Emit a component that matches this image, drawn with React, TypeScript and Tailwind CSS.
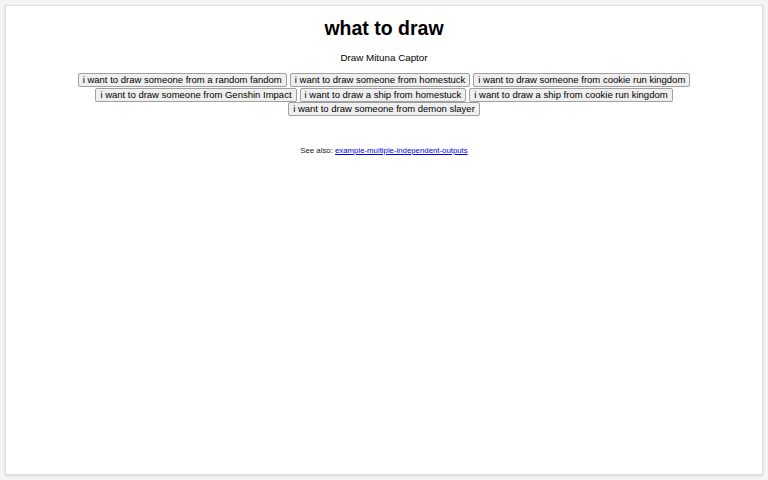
const options = [
  "i want to draw someone from a random fandom",
  "i want to draw someone from homestuck",
  "i want to draw someone from cookie run kingdom",
  "i want to draw someone from Genshin Impact",
  "i want to draw a ship from homestuck",
  "i want to draw a ship from cookie run kingdom",
  "i want to draw someone from demon slayer",
];

export default function App() {
  return (
    <div className="h-[480px] w-[768px] bg-[#f4f4f4] p-[5px] font-['Liberation_Sans',Arial,sans-serif] text-black">
      <div className="flex h-full flex-col items-center border border-[#dedede] bg-white shadow-[0_1px_2px_rgba(0,0,0,0.12)]">
        <h1 className="mt-[11px] text-[19.5px] font-bold leading-[23px]">what to draw</h1>
        <p className="mt-[12px] text-[9.8px] leading-[12px]">Draw Mituna Captor</p>

        {/* option buttons */}
        <div className="mt-[9px] flex w-[640px] flex-wrap justify-center gap-x-[3px] gap-y-[0.5px]">
          {options.map((label) => (
            <button
              key={label}
              className="h-[14px] rounded-[2px] border border-[#a0a0a0] bg-[#efefef] px-[4px] text-[9.5px] leading-[12px] text-black"
            >
              {label}
            </button>
          ))}
        </div>

        <p className="mt-[30px] text-[7.8px] leading-[10px] text-[#222]">
          See also:{" "}
          <a href="#" className="text-[#0000ee] underline">
            example-multiple-independent-outputs
          </a>
        </p>
      </div>
    </div>
  );
}
